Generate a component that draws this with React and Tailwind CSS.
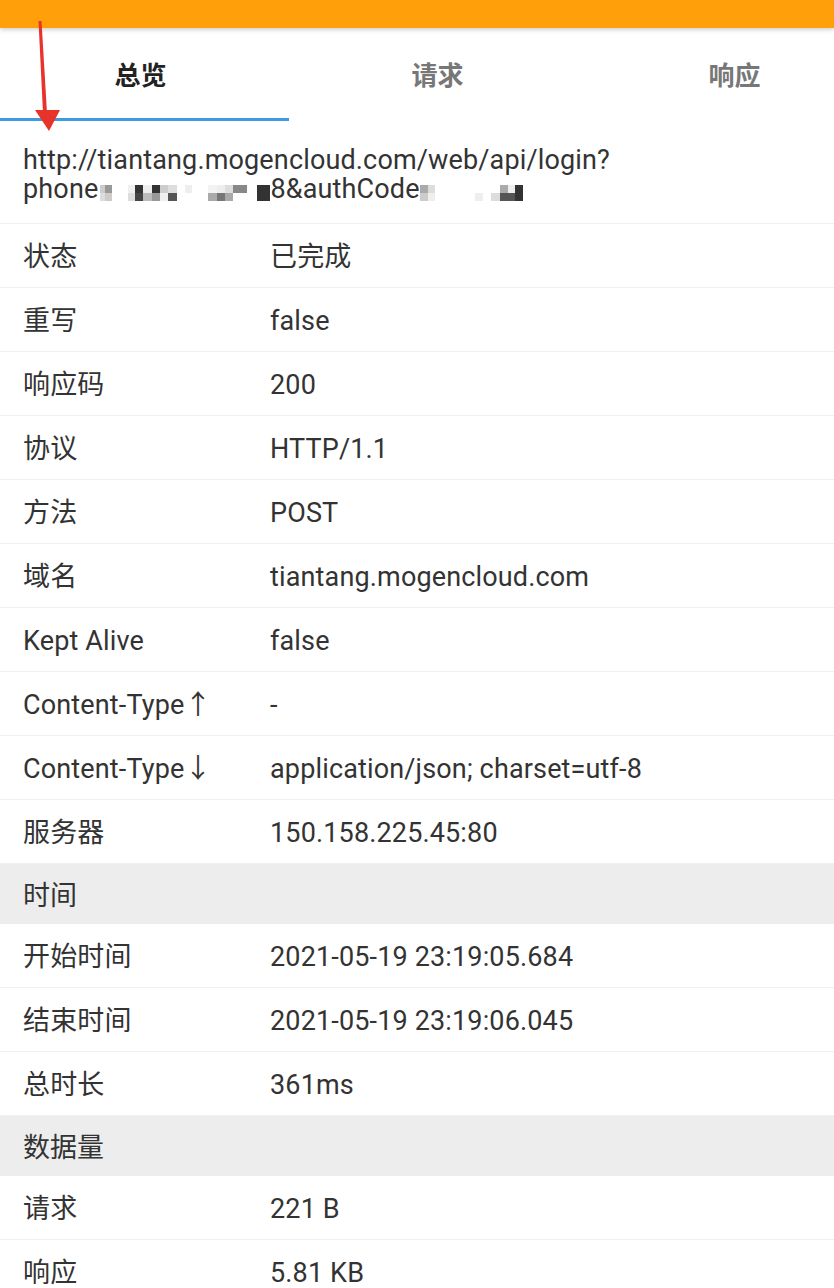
const font = { fontFamily: 'Roboto, "Noto Sans CJK SC", sans-serif' }

const sections = [
  {
    rows: [
      ['状态', '已完成'],
      ['重写', 'false'],
      ['响应码', '200'],
      ['协议', 'HTTP/1.1'],
      ['方法', 'POST'],
      ['域名', 'tiantang.mogencloud.com'],
      ['Kept Alive', 'false'],
      ['Content-Type↑', '-'],
      ['Content-Type↓', 'application/json; charset=utf-8'],
      ['服务器', '150.158.225.45:80'],
    ],
  },
  {
    title: '时间',
    rows: [
      ['开始时间', '2021-05-19 23:19:05.684'],
      ['结束时间', '2021-05-19 23:19:06.045'],
      ['总时长', '361ms'],
    ],
  },
  {
    title: '数据量',
    rows: [
      ['请求', '221 B'],
      ['响应', '5.81 KB'],
    ],
  },
]

const tabs = ['总览', '请求', '响应']

// pixelated mosaic over the phone number / auth code: [width, top cell, bottom cell]
const phoneMask = [
  ['w-[2px]', '', ''],
  ['w-[5px]', 'bg-[#ccc]', 'bg-[#ddd]'],
  ['w-[7px]', 'bg-[#999]', 'bg-[#ccc]'],
  ['w-[16px]', '', ''],
  ['w-[7px]', 'bg-[#f0f0f0]', 'bg-[#ddd]'],
  ['w-[8px]', 'bg-[#333]', 'bg-[#444]'],
  ['w-[9px]', 'bg-[#eee]', 'bg-[#bbb]'],
  ['w-[8px]', 'bg-[#333]', 'bg-[#999]'],
  ['w-[8px]', 'bg-[#ccc]', 'bg-[#eee]'],
  ['w-[9px]', 'bg-[#ddd]', 'bg-[#555]'],
  ['w-[8px]', '', ''],
  ['w-[7px]', 'bg-[#eee]', ''],
  ['w-[16px]', '', ''],
  ['w-[9px]', 'bg-[#f3f3f3]', 'bg-[#aaa]'],
  ['w-[8px]', 'bg-[#eee]', 'bg-[#777]'],
  ['w-[8px]', 'bg-[#ddd]', 'bg-[#aaa]'],
  ['w-[14px]', 'bg-[#888]', ''],
  ['w-[10px]', '', ''],
  ['w-[13px]', 'bg-[#333]', 'bg-[#333]'],
]

const codeMask = [
  ['w-[8px]', 'bg-[#aaa]', 'bg-[#ccc]'],
  ['w-[7px]', 'bg-[#ddd]', 'bg-[#eee]'],
  ['w-[40px]', '', ''],
  ['w-[8px]', '', 'bg-[#eee]'],
  ['w-[8px]', '', ''],
  ['w-[9px]', '', 'bg-[#ddd]'],
  ['w-[8px]', 'bg-[#aaa]', 'bg-[#555]'],
  ['w-[7px]', 'bg-[#eee]', 'bg-[#555]'],
  ['w-[8px]', 'bg-[#333]', 'bg-[#333]'],
]

function Mosaic({ cols }) {
  return (
    <span className="flex mt-[10px]">
      {cols.map(([w, top, bottom], i) => (
        <span key={i} className={`flex flex-col ${w}`}>
          <span className={`h-[8px] ${top}`} />
          <span className={`h-[8px] ${bottom}`} />
        </span>
      ))}
    </span>
  )
}

function Row({ label, value }) {
  return (
    <div className="flex h-16 items-center border-b border-[#f1f1f1] px-[23px] pt-[4px] text-[27px] tracking-[0.15px] text-[#333]">
      <span className="w-[247px] shrink-0">{label}</span>
      <span>{value}</span>
    </div>
  )
}

export default function App() {
  return (
    <div className="relative w-[834px] h-[1288px] overflow-hidden bg-white" style={font}>
      <div className="relative z-10 h-[28px] bg-[#ffa00a] shadow-[0_2px_4px_rgba(0,0,0,0.18)]" />

      <div className="relative flex h-[93px] ml-[-8px]">
        {tabs.map((t, i) => (
          <div
            key={t}
            className={`w-[297px] shrink-0 flex items-start justify-center pt-[29px] text-[26px] font-bold ${i === 0 ? 'text-[#222]' : 'text-[#777]'}`}
          >
            {t}
          </div>
        ))}
        <div className="absolute left-[8px] bottom-0 h-[3px] w-[289px] bg-[#3d9be0]" />
      </div>

      <div className="h-[103px] border-b border-[#f1f1f1] px-[23px] pt-[25px] text-[27px] leading-[29px] tracking-[0.15px] text-[#333]">
        <div>http://tiantang.mogencloud.com/web/api/login?</div>
        <div className="flex items-start">
          <span>phone</span>
          <Mosaic cols={phoneMask} />
          <span>8&amp;authCode</span>
          <Mosaic cols={codeMask} />
        </div>
      </div>

      {sections.map((s, si) => (
        <div key={si}>
          {s.title && (
            <div className="flex h-[60px] items-center bg-[#ededed] px-[23px] pt-[4px] text-[27px] text-[#333]">
              {s.title}
            </div>
          )}
          {s.rows.map(([l, v]) => (
            <Row key={l} label={l} value={v} />
          ))}
        </div>
      ))}

      <svg className="absolute left-0 top-0 z-20 pointer-events-none" width="80" height="140" viewBox="0 0 80 140">
        <polygon points="38.5,21 41.5,21 47,113 43,113" fill="#e8332a" />
        <polygon points="35,110 60,110 49,131" fill="#e8332a" />
      </svg>
    </div>
  )
}
